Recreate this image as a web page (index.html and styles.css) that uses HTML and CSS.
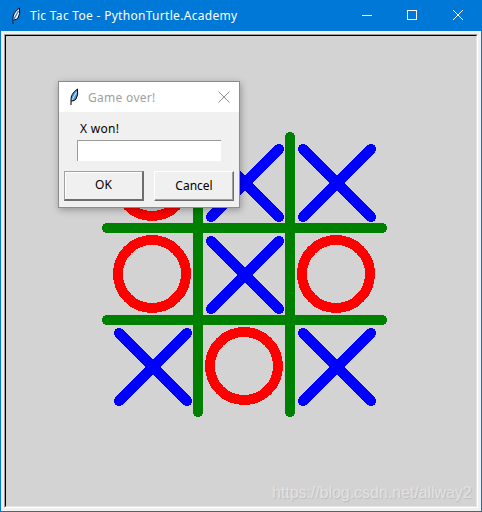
FILE: index.html
```html
<!DOCTYPE html>
<html lang="en">
<head>
<meta charset="utf-8">
<title>Tic Tac Toe - PythonTurtle.Academy</title>
<link rel="stylesheet" href="styles.css">
</head>
<body>
<div class="window">
  <header class="titlebar">
    <svg class="feather" viewBox="0 0 12 18" width="12" height="18"><path d="M3 17 L3 12 Q2.5 6 9.5 1 Q10.5 7 8 11 Q6.5 13 3.5 13" fill="#f2f6fb" stroke="#000" stroke-width="1"/><path d="M4 12 L8.5 4" stroke="#3a78c8" stroke-width="1.2" fill="none"/></svg>
    <span class="title-text">Tic Tac Toe - PythonTurtle.Academy</span>
    <div class="controls">
      <svg class="ctl" viewBox="0 0 46 31" width="46" height="31"><path d="M19 15.5 H29" stroke="#fff" stroke-width="1"/></svg>
      <svg class="ctl" viewBox="0 0 46 31" width="46" height="31"><rect x="18.5" y="10.5" width="9" height="9" fill="none" stroke="#fff" stroke-width="1"/></svg>
      <svg class="ctl" viewBox="0 0 46 31" width="46" height="31"><path d="M18 10 L28 20 M28 10 L18 20" stroke="#fff" stroke-width="1"/></svg>
    </div>
  </header>
  <main class="client">
    <div class="frame-outer">
      <div class="frame-inner">
        <svg class="board" viewBox="6 36 470 470" width="470" height="470" shape-rendering="crispEdges">
          <g class="grid-lines">
            <path d="M198 137 V412 M290 137 V412 M107 228 H382 M107 320 H382"/>
          </g>
          <g class="cross">
            <path d="M211 149 L279 217 M279 149 L211 217"/>
            <path d="M303 149 L371 217 M371 149 L303 217"/>
            <path d="M211 241 L279 309 M279 241 L211 309"/>
            <path d="M119 333 L187 401 M187 333 L119 401"/>
            <path d="M303 333 L371 401 M371 333 L303 401"/>
          </g>
          <g class="nought">
            <circle cx="152" cy="182" r="34"/>
            <circle cx="152" cy="274" r="34"/>
            <circle cx="336" cy="274" r="34"/>
            <circle cx="244" cy="366" r="34"/>
          </g>
        </svg>
      </div>
    </div>
  </main>
  <div class="watermark">https://blog.csdn.net/allway2</div>
  <section class="dialog">
    <div class="dialog-title">
      <svg class="feather-small" viewBox="0 0 12 18" width="12" height="18"><path d="M3 17 L3 12 Q2.5 6 9.5 1 Q10.5 7 8 11 Q6.5 13 3.5 13" fill="#4d9be6" stroke="#000" stroke-width="1"/><path d="M4 12 L8.5 4" stroke="#cfe6fb" stroke-width="1" fill="none"/></svg>
      <span class="dialog-title-text">Game over!</span>
      <svg class="dialog-close" viewBox="0 0 12 12" width="12" height="12"><path d="M0.5 0.5 L11.5 11.5 M11.5 0.5 L0.5 11.5" stroke="#8f8f8f" stroke-width="1"/></svg>
    </div>
    <div class="dialog-body">
      <div class="prompt">X won!</div>
      <div class="entry"></div>
      <div class="buttons">
        <button class="btn btn-default">OK</button>
        <button class="btn">Cancel</button>
      </div>
    </div>
  </section>
</div>
</body>
</html>
```
FILE: styles.css
```css
* { box-sizing: border-box; }
html, body { margin: 0; padding: 0; }
body { width: 482px; height: 512px; overflow: hidden; font-family: "Noto Sans", "Open Sans", sans-serif; }
.window { position: relative; width: 482px; height: 512px; display: flex; flex-direction: column; background: #0078d7; padding: 0 1px 1px; }
.titlebar { height: 31px; flex: none; display: flex; align-items: center; color: #fff; margin: 0 -1px; padding-left: 10px; }
.feather { flex: none; }
.title-text { margin-left: 8px; font-size: 12px; letter-spacing: .3px; white-space: nowrap; }
.controls { margin-left: auto; margin-right: 1px; display: flex; }
.ctl { display: block; }
.client { flex: 1; min-height: 0; background: #f0f0f0; padding: 3px; display: flex; }
.frame-outer { flex: 1; border: 1px solid; border-color: #a0a0a0 #ffffff #ffffff #a0a0a0; display: flex; min-width: 0; }
.frame-inner { flex: 1; background: #d3d3d3; border: 1px solid; border-color: #000 #e3e3e3 #e3e3e3 #000; overflow: hidden; min-width: 0; }
.board { display: block; }
.grid-lines path { fill: none; stroke: #008000; stroke-width: 10; stroke-linecap: round; }
.cross path { fill: none; stroke: #0000ff; stroke-width: 10; stroke-linecap: round; }
.nought circle { fill: none; stroke: #ff0000; stroke-width: 10; }
.watermark { position: absolute; left: 272px; top: 484px; font: 16px "Liberation Sans", sans-serif; letter-spacing: -.05px; color: #e2e2e2; text-shadow: 1px 1px 1px #bcbcbc; white-space: nowrap; }
.dialog { position: absolute; left: 58px; top: 81px; width: 182px; height: 127px; border: 1px solid #8c8c8c; background: #f0f0f0; box-shadow: 1px 2px 7px rgba(0,0,0,.3); display: flex; flex-direction: column; }
.dialog-title { height: 30px; flex: none; background: #fff; display: flex; align-items: center; padding-left: 9px; }
.dialog-title-text { margin-left: 8px; font-size: 12px; letter-spacing: .3px; color: #a0a0a0; }
.dialog-close { margin-left: auto; margin-right: 9px; }
.dialog-body { flex: 1; padding: 0 5px; display: flex; flex-direction: column; }
.prompt { font-size: 12px; line-height: 16px; margin: 9px 0 0 16px; letter-spacing: .3px; color: #000; }
.entry { width: 144px; height: 21px; margin: 3px 0 0 13px; background: #fff; border-top: 1px solid #9a9a9a; border-left: 1px solid #9a9a9a; }
.buttons { display: flex; gap: 10px; margin-top: 10px; }
.btn { width: 80px; height: 30px; padding: 0 0 2px; background: #f0f0f0; font: 12px "Noto Sans", "Open Sans", sans-serif; color: #000; border: 1px solid; border-color: #fff #6d6d6d #6d6d6d #fff; box-shadow: inset -1px -1px 0 #a0a0a0; }
.btn-default { border-width: 1px 2px 2px 1px; border-color: #a0a0a0 #6d6d6d #6d6d6d #a0a0a0; box-shadow: inset 1px 1px 0 #fff; }
```
